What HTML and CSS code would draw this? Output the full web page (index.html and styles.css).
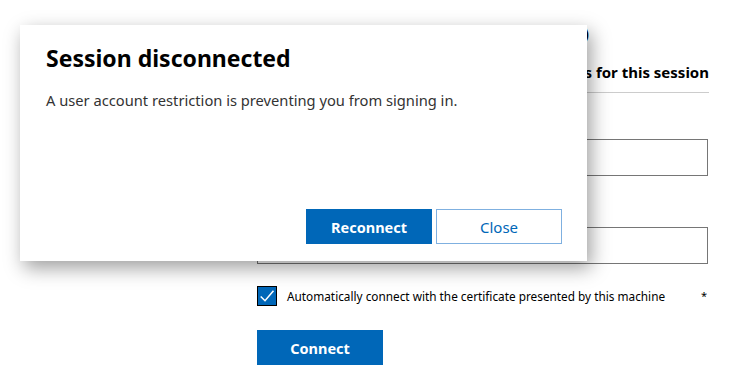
FILE: index.html
```html
<!DOCTYPE html>
<html>
<head>
<meta charset="utf-8">
<link rel="stylesheet" href="styles.css">
</head>
<body>
<div class="page">
  <div class="title">Sign in (optional)</div>
  <div class="section">Credentials for this session</div>
  <div class="field-label">User name</div>
  <div class="input"></div>
  <div class="field-label second">Password</div>
  <div class="input"></div>
  <label class="check-row">
    <span class="checkbox">
      <svg viewBox="0 0 20 20" width="18" height="18"><path d="M3 10.5 L7.8 15.2 L17.2 4.2" fill="none" stroke="#fff" stroke-width="1.7"/></svg>
    </span>
    <span class="check-text">Automatically connect with the certificate presented by this machine</span>
    <span class="asterisk">*</span>
  </label>
  <button class="btn-primary connect">Connect</button>
</div>

<div class="dialog">
  <h1 class="dialog-title">Session disconnected</h1>
  <p class="dialog-text">A user account restriction is preventing you from signing in.</p>
  <div class="dialog-actions">
    <button class="btn-primary">Reconnect</button>
    <button class="btn-secondary">Close</button>
  </div>
</div>
</body>
</html>
```
FILE: styles.css
```css
html, body {
  margin: 0;
  padding: 0;
  background: #fff;
  font-family: "Noto Sans", "Open Sans", sans-serif;
  color: #000;
}
.page {
  margin-left: 257px;
  width: 451px;
  padding-top: 23px;
  display: flex;
  flex-direction: column;
}
.title {
  font-size: 16px;
  font-weight: 700;
  line-height: 22px;
  white-space: nowrap;
  color: #000;
  width: 332px;
  text-align: right;
}
.section {
  margin-top: 17px;
  font-size: 15px;
  font-weight: 700;
  line-height: 20px;
  text-align: right;
  padding-bottom: 10px;
  border-bottom: 1px solid #cccccc;
  width: 452px;
}
.field-label {
  font-size: 13px;
  line-height: 18px;
  margin-top: 20px;
  height: 18px;
  margin-bottom: 8px;
}
.field-label.second {
  margin-top: 25px;
}
.input {
  height: 35px;
  border: 1px solid #767676;
  width: 449px;
}
.check-row {
  display: flex;
  align-items: center;
  margin-top: 22px;
  height: 20px;
}
.checkbox {
  width: 18px;
  height: 18px;
  border: 1px solid #000;
  background: #0067b8;
  display: flex;
  align-items: center;
  justify-content: center;
  flex: none;
}
.check-text {
  font-size: 11.8px;
  margin-left: 10px;
  color: #000;
  white-space: nowrap;
}
.asterisk {
  margin-left: auto;
  font-size: 11px;
  margin-right: 1px;
  position: relative;
  top: -1px;
}
.btn-primary {
  width: 126px;
  height: 35px;
  border: none;
  background: #0067b8;
  color: #fff;
  font-family: "Noto Sans", "Open Sans", sans-serif;
  font-size: 14.5px;
  font-weight: 700;
  padding: 0;
}
.connect {
  margin-top: 24px;
}
.btn-secondary {
  width: 126px;
  height: 35px;
  border: 1px solid #7fb0e0;
  background: #fff;
  color: #0067b8;
  font-family: "Noto Sans", "Open Sans", sans-serif;
  font-size: 15px;
  font-weight: 400;
  padding: 0;
}
.dialog {
  position: absolute;
  left: 20px;
  top: 25px;
  width: 567px;
  height: 236px;
  box-sizing: border-box;
  background: #fff;
  box-shadow: 4px 7px 18px rgba(0, 0, 0, 0.38);
  padding: 17px 25px 17px 26px;
  display: flex;
  flex-direction: column;
}
.dialog-title {
  margin: 0;
  font-size: 23px;
  line-height: 32px;
  font-weight: 700;
  color: #000;
}
.dialog-text {
  margin: 16px 0 0 0;
  font-size: 14.7px;
  line-height: 20px;
  color: #333;
}
.dialog-actions {
  margin-top: auto;
  display: flex;
  justify-content: flex-end;
  gap: 4px;
}
```
